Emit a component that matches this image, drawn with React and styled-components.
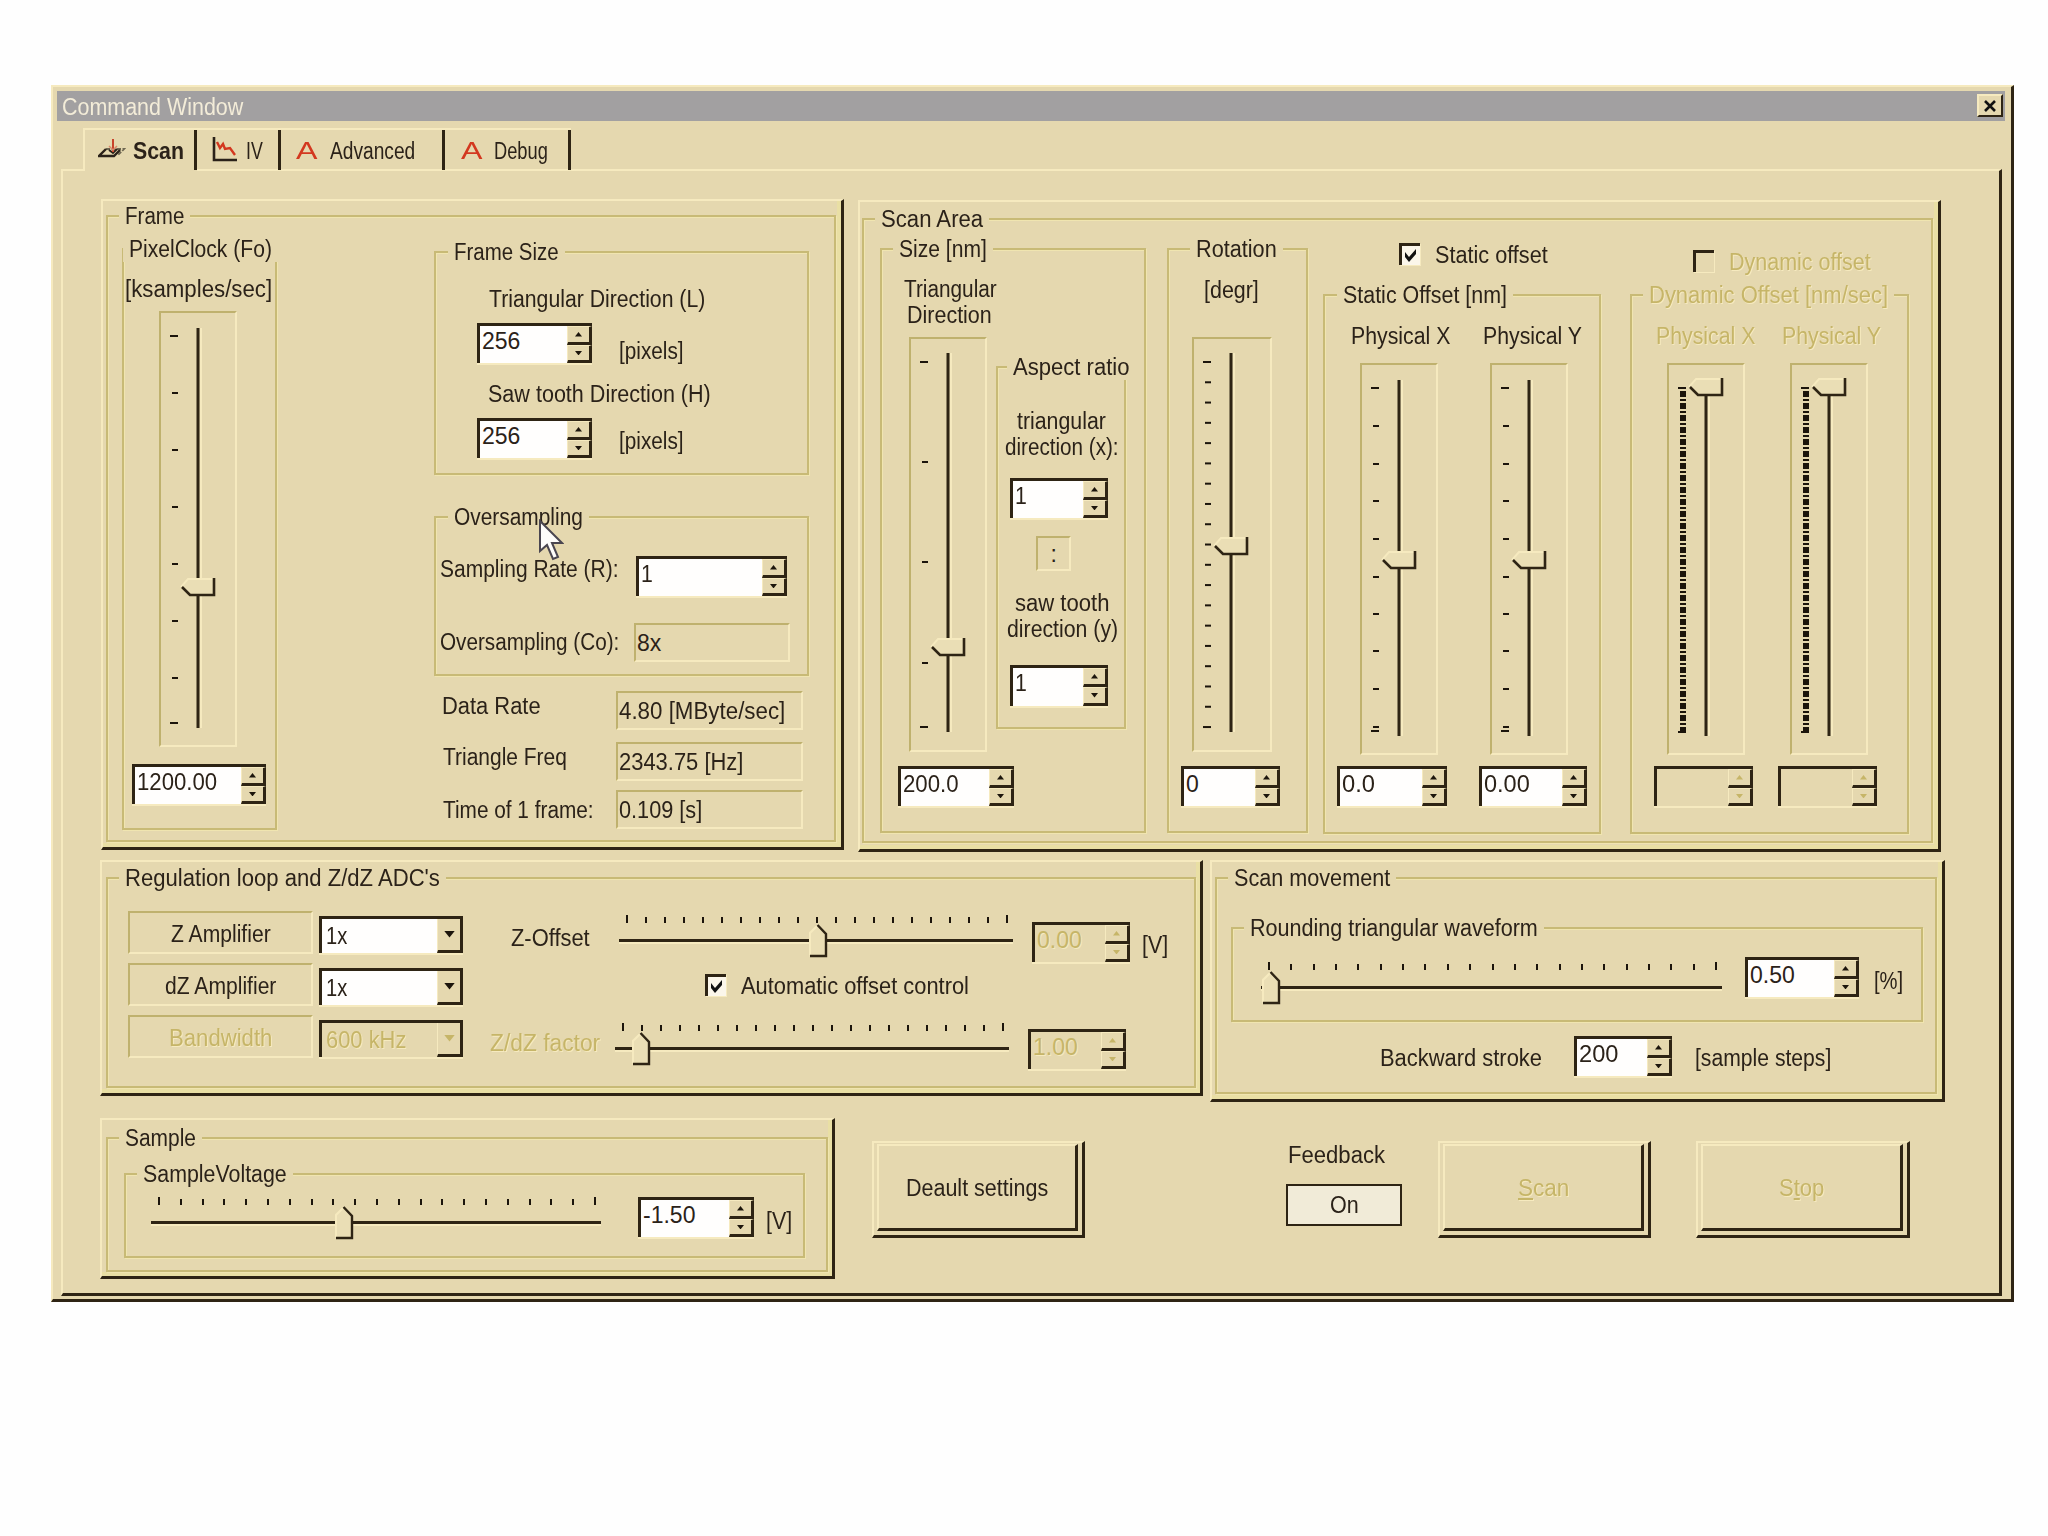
import React, { useLayoutEffect, useRef, useState } from 'react';
import styled, { createGlobalStyle, css } from 'styled-components';

const face = '#e5d8af';
const light = '#f6eabf';
const shade = '#c8ba76';
const dark = '#2e2414';
const ink = '#2b2219';
const faded = '#c6b568';

const GlobalStyle = createGlobalStyle`
  *, *::before, *::after {
    box-sizing: border-box;
  }
  body {
    margin: 0;
    background: #fefefe;
    color: ${ink};
    font-family: 'Liberation Sans', Arial, sans-serif;
    font-size: 23px;
    line-height: 26px;
  }
`;

// every part sits in a flex row or column and is spaced from the previous one
const spaced = css`
  flex: none;
  margin-top: ${({ $mt = 0 }) => $mt}px;
  margin-left: ${({ $ml = 0 }) => $ml}px;
`;

const Desktop = styled.div`
  height: 1536px;
  width: 2048px;
  padding: 85px 0 0 51px;
  overflow: hidden;
`;

const Window = styled.div`
  width: 1963px;
  height: 1217px;
  padding: 4px 6px 0 4px;
  background: ${face};
  border: 2px solid ${light};
  border-right: 3px solid ${dark};
  border-bottom: 3px solid ${dark};
`;

const TitleBar = styled.div`
  display: flex;
  justify-content: space-between;
  height: 30px;
  padding: 3px 2px 0 5px;
  background: #a2a0a1;
  color: #f3ecd8;
`;

const CloseButton = styled.button`
  display: flex;
  align-items: center;
  justify-content: center;
  width: 26px;
  height: 23px;
  padding: 0;
  background: ${face};
  border: 2px solid ${light};
  border-right-color: ${dark};
  border-bottom-color: ${dark};
`;

const Tabs = styled.div`
  display: flex;
  height: 41px;
  margin: 7px 0 0 26px;
`;

const Tab = styled.div`
  display: flex;
  position: relative;
  width: ${({ $w }) => $w}px;
  height: ${({ $active }) => ($active ? 43 : 41)}px;
  padding: 7px 0 0 ${({ $pad }) => $pad}px;
  background: ${face};
  border-top: 2px solid ${light};
  border-left: ${({ $active }) => ($active ? 2 : 0)}px solid ${light};
  font-weight: ${({ $active }) => ($active ? 'bold' : 'normal')};

  &::after {
    content: '';
    position: absolute;
    top: 0;
    right: 0;
    width: 3px;
    height: 40px;
    background: ${dark};
  }
`;

const Page = styled.div`
  width: 1941px;
  height: 1127px;
  margin-left: 4px;
  border: 2px solid ${light};
  border-right: 3px solid ${dark};
  border-bottom: 3px solid ${dark};
`;

const Row = styled.div`
  ${spaced}
  display: flex;
  align-items: flex-start;
  height: ${({ $h }) => ($h ? `${$h}px` : 'auto')};
`;

const Column = styled.div`
  ${spaced}
  display: flex;
  flex-direction: column;
  align-items: flex-start;
  width: ${({ $w }) => ($w ? `${$w}px` : 'auto')};
`;

const Panel = styled.div`
  ${spaced}
  width: ${({ $w }) => $w}px;
  height: ${({ $h }) => $h}px;
  border: 2px solid ${light};
  border-right: 3px solid ${dark};
  border-bottom: 3px solid ${dark};
  box-shadow: inset -4px -4px 0 #e9dfa4;
`;

const GroupBox = styled.fieldset`
  ${spaced}
  display: flex;
  flex-direction: ${({ $column }) => ($column ? 'column' : 'row')};
  align-items: flex-start;
  min-width: 0;
  width: ${({ $w }) => $w}px;
  height: ${({ $h }) => $h}px;
  padding: 0;
  border: 2px solid ${shade};
  box-shadow: inset 1px 1px 0 #f0e5b0, 1px 1px 0 #f0e5b0;
`;

const Legend = styled.legend`
  height: 26px;
  margin-left: ${({ $ml }) => $ml}px;
  padding: 0 6px;
  background: ${face};
`;

const TextBox = styled.span`
  ${spaced}
  display: block;
  width: ${({ $w }) => $w}px;
  height: 26px;
  line-height: 26px;
  white-space: nowrap;
  color: ${({ $off }) => ($off ? faded : 'inherit')};
  text-shadow: ${({ $off }) => ($off ? `1px 1px 0 ${light}` : 'none')};
`;

const TextRun = styled.span`
  display: inline-block;
  transform-origin: 0 50%;
`;

const Sunken = styled.div`
  ${spaced}
  display: flex;
  align-items: center;
  justify-content: ${({ $center }) => ($center ? 'center' : 'flex-start')};
  width: ${({ $w }) => $w}px;
  height: ${({ $h }) => $h}px;
  padding-left: ${({ $center }) => ($center ? 0 : 1)}px;
  border: 2px solid #bfb16e;
  border-right-color: ${light};
  border-bottom-color: ${light};
`;

const Field = styled.div`
  ${spaced}
  display: flex;
  justify-content: space-between;
  width: ${({ $w }) => $w}px;
  height: ${({ $h = 40 }) => $h}px;
  padding-left: 2px;
  background: ${({ $off }) => ($off ? face : '#fffefd')};
  border-top: 3px solid ${dark};
  border-left: 3px solid ${dark};
  box-shadow: 0 2px 0 ${light};
`;

const SpinButtons = styled.div`
  display: flex;
  flex-direction: column;
  width: 25px;
  background: ${face};
`;

const SpinButton = styled.div`
  display: flex;
  flex: 1;
  align-items: center;
  justify-content: center;
  border-top: 1px solid ${light};
  border-left: 1px solid ${light};
  border-right: 3px solid ${dark};
  border-bottom: 3px solid ${dark};
`;

const DropButton = styled.div`
  display: flex;
  align-items: center;
  justify-content: center;
  width: 26px;
  background: ${face};
  border-left: 1px solid ${light};
  border-right: 3px solid ${dark};
  border-bottom: 3px solid ${dark};
`;

const CheckMark = styled.span`
  ${spaced}
  display: flex;
  width: 21px;
  height: 22px;
  background: ${({ $off }) => ($off ? face : '#fbf6ea')};
  border-top: 3px solid ${dark};
  border-left: 3px solid ${dark};
  box-shadow: 1px 1px 0 ${light};
`;

const PushButton = styled.button`
  ${spaced}
  width: ${({ $w }) => $w}px;
  height: 97px;
  padding: 0;
  background: ${face};
  border: 2px solid ${light};
  border-right: 3px solid ${dark};
  border-bottom: 3px solid ${dark};
  color: ${ink};
  font: inherit;
`;

const ButtonFace = styled.span`
  display: flex;
  align-items: center;
  justify-content: center;
  width: calc(100% - 7px);
  height: 87px;
  margin: 1px 4px 4px 3px;
  padding-top: 2px;
  border: 2px solid ${light};
  border-right: 3px solid ${dark};
  border-bottom: 3px solid ${dark};
`;

const StateBox = styled.div`
  display: flex;
  align-items: center;
  justify-content: center;
  width: 116px;
  height: 42px;
  margin-top: 16px;
  background: #f1ebd8;
  border: 2px solid ${dark};
`;

const IconA = styled.span`
  color: #d3381f;
  font-weight: normal;
`;

const Icon = styled.svg`
  display: block;
  flex: none;
`;

const Pointer = styled.svg`
  position: absolute;
  top: 519px;
  left: 538px;
`;

// keeps a caption at the width of the narrow bitmap system font
function Text({ w, children, ...rest }) {
  const run = useRef(null);
  const [scale, setScale] = useState(1);
  useLayoutEffect(() => {
    setScale(w / run.current.offsetWidth);
  }, [w, children]);
  return (
    <TextBox $w={w} {...rest}>
      <TextRun ref={run} style={{ transform: `scaleX(${scale})` }}>
        {children}
      </TextRun>
    </TextBox>
  );
}

function Group({ title, titleW, titleX, off, children, ...rest }) {
  return (
    <GroupBox {...rest}>
      <Legend $ml={titleX}>
        <Text w={titleW} $off={off}>{title}</Text>
      </Legend>
      {children}
    </GroupBox>
  );
}

function Arrow({ up, off, size = 8 }) {
  return (
    <Icon width={size} height={size / 2 + 1} viewBox="0 0 8 5">
      <path d={up ? 'M0 5L4 0L8 5Z' : 'M0 0L8 0L4 5Z'} fill={off ? faded : '#1c150c'} />
    </Icon>
  );
}

function Spin({ value, textW, off, ...rest }) {
  return (
    <Field $off={off} {...rest}>
      {value ? <Text w={textW} $mt={2} $off={off}>{value}</Text> : <span />}
      <SpinButtons>
        <SpinButton><Arrow up off={off} size={7} /></SpinButton>
        <SpinButton><Arrow off={off} size={7} /></SpinButton>
      </SpinButtons>
    </Field>
  );
}

function Combo({ value, textW, off }) {
  return (
    <Field $off={off} $w={144} $h={37} $ml={6} $mt={5}>
      <Text w={textW} $ml={2} $mt={4} $off={off}>{value}</Text>
      <DropButton><Arrow off={off} size={11} /></DropButton>
    </Field>
  );
}

function Check({ label, textW, off, ...rest }) {
  return (
    <Row $h={26} {...rest}>
      <CheckMark $mt={1} $off={off}>
        {!off && (
          <Icon width="18" height="18" viewBox="0 0 18 18">
            <path d="M3 6L7 11L14 3V8L7 16L3 11Z" fill="#111" />
          </Icon>
        )}
      </CheckMark>
      <Text w={textW} $ml={15} $off={off}>{label}</Text>
    </Row>
  );
}

function VSlider({ w = 78, h, ticks, track, thumb, dense, ...rest }) {
  const last = ticks.length - 1;
  const [from, to] = track;
  return (
    <Sunken $w={w} $h={h} $center {...rest}>
      <Icon width={w - 4} height={h - 4} viewBox={`2 2 ${w - 4} ${h - 4}`}>
        {ticks.map((t, i) => {
          const end = i === 0 || i === last;
          const tall = dense && !end && i % 3 === 1;
          return (
            <rect
              key={t}
              x={end ? 11 : 13}
              y={tall ? t - 1 : t - 1}
              width={end ? 8 : 6}
              height={tall ? 4 : 2}
              fill="#1c150c"
            />
          );
        })}
        <rect x="37.500" y={from} width="3" height={to - from} fill={dark} />
        <rect x="41" y={from} width="2" height={to - from} fill={light} />
        <g transform={`translate(22 ${thumb})`}>
          <path d="M1 9L8 1H34V18H9Z" fill="#eadeb5" />
          <path d="M0 9L7 1H33" fill="none" stroke={light} strokeWidth="2" />
          <path d="M1 9L9 17H33V0" fill="none" stroke={dark} strokeWidth="2.6" />
        </g>
      </Icon>
    </Sunken>
  );
}

const SliderBox = styled.div`
  ${spaced}
`;

function HSlider({ w, last, thumb, ...rest }) {
  const step = (last - 12) / 20;
  return (
    <SliderBox {...rest}>
      <Icon width={w} height="46" viewBox={`0 0 ${w} 46`}>
        {Array.from({ length: 21 }, (_, i) => {
          const end = i === 0 || i === 20;
          return (
            <rect
              key={i}
              x={Math.round(12 + i * step) - 1}
              y={end ? 2 : 4}
              width="2"
              height={end ? 8 : 6}
              fill="#1c150c"
            />
          );
        })}
        <rect x="4" y="26" width={last + 2} height="3" fill={dark} />
        <rect x="4" y="29" width={last + 2} height="2" fill={light} />
        <g transform={`translate(${thumb} 11)`}>
          <path d="M0 33V8L9 0L18 10V33Z" fill="#eadeb5" />
          <path d="M1 31V9L9 1" fill="none" stroke={light} strokeWidth="2" />
          <path d="M8.500 1L17 10V32H1" fill="none" stroke={dark} strokeWidth="2.4" />
        </g>
      </Icon>
    </SliderBox>
  );
}

const range = (n, start, step) => Array.from({ length: n }, (_, i) => start + i * step);

const clockTicks = [25, 82, 139, 196, 253, 310, 367, 412];
const sizeTicks = [25, 125, 225, 326, 390];
const rotationTicks = range(19, 25, 20.28);
const offsetTicks = [25, 63, 101, 138, 176, 214, 251, 288, 326, 364, 368];
const denseTicks = range(87, 25, 4);

const readouts = [
  { label: 'Data Rate', w: 99, ml: 8, drop: 2, gap: 75, value: '4.80 [MByte/sec]', valueW: 166, mt: 15 },
  { label: 'Triangle Freq', w: 124, ml: 9, drop: 2, gap: 49, value: '2343.75 [Hz]', valueW: 124, mt: 13 },
  { label: 'Time of 1 frame:', w: 151, ml: 9, drop: 7, gap: 22, value: '0.109 [s]', valueW: 83, mt: 10 },
];

const amplifiers = [
  { label: 'Z Amplifier', w: 100, value: '1x', valueW: 21 },
  { label: 'dZ Amplifier', w: 111, value: '1x', valueW: 21 },
  { label: 'Bandwidth', w: 103, value: '600 kHz', valueW: 80, off: true },
];

function FramePanel() {
  return (
    <Panel $w={743} $h={651} $ml={38}>
      <Group title="Frame" titleW={59} titleX={11} $w={730} $h={639} $ml={3} $mt={2}>
        <Group title="PixelClock (Fo)" titleW={143} titleX={-1} $column $w={155} $h={594} $ml={14} $mt={7}>
          <Text w={147} $ml={1} $mt={14}>[ksamples/sec]</Text>
          <VSlider h={436} ticks={clockTicks} track={[17, 417]} thumb={267} $ml={35} $mt={9} />
          <Spin value="1200.00" textW={80} $w={134} $ml={8} $mt={17} />
        </Group>
        <Column $ml={155}>
          <Group title="Frame Size" titleW={105} titleX={12} $column $w={375} $h={236} $mt={10}>
            <Text w={216} $ml={53} $mt={21}>Triangular Direction (L)</Text>
            <Row $h={40} $mt={11}>
              <Spin value="256" textW={38} $w={115} $ml={41} />
              <Text w={65} $ml={27} $mt={15}>[pixels]</Text>
            </Row>
            <Text w={223} $ml={52} $mt={18}>Saw tooth Direction (H)</Text>
            <Row $h={40} $mt={11}>
              <Spin value="256" textW={38} $w={115} $ml={41} />
              <Text w={65} $ml={27} $mt={10}>[pixels]</Text>
            </Row>
          </Group>
          <Group title="Oversampling" titleW={129} titleX={12} $column $w={375} $h={172} $mt={29}>
            <Row $h={41} $mt={26}>
              <Text w={179} $ml={4}>Sampling Rate (R):</Text>
              <Spin value="1" textW={12} $w={151} $ml={17} />
            </Row>
            <Row $h={39} $mt={26}>
              <Text w={179} $ml={4} $mt={6}>Oversampling (Co):</Text>
              <Sunken $w={156} $h={39} $ml={15}><Text w={24}>8x</Text></Sunken>
            </Row>
          </Group>
          {readouts.map((r) => (
            <Row key={r.label} $h={38} $mt={r.mt}>
              <Text w={r.w} $ml={r.ml} $mt={r.drop}>{r.label}</Text>
              <Sunken $w={187} $h={39} $ml={r.gap}><Text w={r.valueW}>{r.value}</Text></Sunken>
            </Row>
          ))}
        </Column>
      </Group>
    </Panel>
  );
}

function OffsetAxis({ label, labelX, sliderX, spinX, spinW, value, textW, dense, ...rest }) {
  return (
    <Column {...rest}>
      <Text w={99} $ml={labelX} $mt={15} $off={dense}>{label}</Text>
      <VSlider
        h={392}
        dense={dense}
        ticks={dense ? denseTicks : offsetTicks}
        track={[17, 373]}
        thumb={dense ? 15 : 188}
        $ml={sliderX}
        $mt={14}
      />
      <Spin value={value} textW={textW} off={dense} $w={spinW} $ml={spinX} $mt={11} />
    </Column>
  );
}

function ScanAreaPanel() {
  return (
    <Panel $w={1083} $h={652} $ml={14} $mt={1}>
      <Group title="Scan Area" titleW={102} titleX={11} $w={1071} $h={637} $ml={2} $mt={4}>
        <Group title="Size [nm]" titleW={88} titleX={11} $w={266} $h={597} $ml={16} $mt={4}>
          <Column $w={114}>
            <Text w={93} $ml={22} $mt={14}>Triangular</Text>
            <Text w={85} $ml={25}>Direction</Text>
            <VSlider h={415} ticks={sizeTicks} track={[16, 395]} thumb={301} $ml={27} $mt={9} />
            <Spin value="200.0" textW={56} $w={116} $ml={16} $mt={14} />
          </Column>
          <Group title="Aspect ratio" titleW={116} titleX={9} $column $w={130} $h={375} $mt={92}>
            <Text w={89} $ml={19} $mt={28}>triangular</Text>
            <Text w={114} $ml={7}>direction (x):</Text>
            <Spin value="1" textW={12} $w={98} $ml={12} $mt={18} />
            <Sunken $w={35} $h={35} $ml={38} $mt={18} $center><Text w={6}>:</Text></Sunken>
            <Text w={94} $ml={17} $mt={19}>saw tooth</Text>
            <Text w={111} $ml={9}>direction (y)</Text>
            <Spin value="1" textW={12} $w={98} $h={41} $ml={12} $mt={23} />
          </Group>
        </Group>
        <Group title="Rotation" titleW={81} titleX={21} $column $w={141} $h={597} $ml={19} $mt={4}>
          <Text w={55} $ml={35} $mt={15}>[degr]</Text>
          <VSlider w={80} h={415} ticks={rotationTicks} track={[16, 395]} thumb={200} $ml={23} $mt={34} />
          <Spin value="0" textW={13} $w={99} $ml={12} $mt={14} />
        </Group>
        <Column $ml={13}>
          <Check label="Static offset" textW={113} $ml={76} $mt={10} />
          <Group title="Static Offset [nm]" titleW={164} titleX={12} $w={278} $h={552} $mt={14}>
            <OffsetAxis label="Physical X" labelX={26} sliderX={35} spinX={12} spinW={110} value="0.0" textW={33} $w={140} />
            <OffsetAxis label="Physical Y" labelX={18} sliderX={25} spinX={14} spinW={108} value="0.00" textW={46} />
          </Group>
        </Column>
        <Column $ml={27}>
          <Check label="Dynamic offset" textW={142} off $ml={63} $mt={17} />
          <Group title="Dynamic Offset [nm/sec]" titleW={239} titleX={11} off $w={279} $h={552} $mt={7}>
            <OffsetAxis label="Physical X" labelX={24} sliderX={35} spinX={22} spinW={99} dense $w={135} />
            <OffsetAxis label="Physical Y" labelX={15} sliderX={23} spinX={11} spinW={99} dense />
          </Group>
        </Column>
      </Group>
    </Panel>
  );
}

function RegulationPanel() {
  return (
    <Panel $w={1103} $h={236} $ml={37}>
      <Group title="Regulation loop and Z/dZ ADC's" titleW={315} titleX={11} $w={1090} $h={223} $ml={4} $mt={3}>
        <Column $ml={20} $mt={11}>
          {amplifiers.map((a) => (
            <Row key={a.label} $h={43} $mt={9}>
              <Sunken $w={185} $h={43} $center>
                <Text w={a.w} $mt={3} $off={a.off}>{a.label}</Text>
              </Sunken>
              <Combo value={a.value} textW={a.valueW} off={a.off} />
            </Row>
          ))}
        </Column>
        <Column>
          <Row $h={62} $mt={20}>
            <Text w={79} $ml={48} $mt={14}>Z-Offset</Text>
            <HSlider w={400} last={392} thumb={194} $ml={25} $mt={2} />
            <Spin value="0.00" textW={45} off $w={98} $ml={17} $mt={11} />
            <Text w={26} $ml={12} $mt={21}>[V]</Text>
          </Row>
          <Check label="Automatic offset control" textW={228} $ml={242} />
          <Row $h={46} $mt={22}>
            <Text w={110} $ml={27} $mt={9} $off>Z/dZ factor</Text>
            <HSlider w={400} last={392} thumb={21} $ml={11} />
            <Spin value="1.00" textW={45} off $w={98} $ml={17} $mt={8} />
          </Row>
        </Column>
      </Group>
    </Panel>
  );
}

function MovementPanel() {
  return (
    <Panel $w={735} $h={242} $ml={7}>
      <Group title="Scan movement" titleW={156} titleX={11} $column $w={722} $h={229} $ml={3} $mt={3}>
        <Group title="Rounding triangular waveform" titleW={288} titleX={11} $w={692} $h={107} $ml={14} $mt={24}>
          <HSlider w={470} last={459} thumb={5} $ml={24} $mt={19} />
          <Spin value="0.50" textW={45} $w={114} $ml={18} $mt={16} />
          <Text w={29} $ml={15} $mt={27}>[%]</Text>
        </Group>
        <Row $mt={14}>
          <Text w={162} $ml={163} $mt={9}>Backward stroke</Text>
          <Spin value="200" textW={39} $w={98} $ml={32} />
          <Text w={136} $ml={23} $mt={9}>[sample steps]</Text>
        </Row>
      </Group>
    </Panel>
  );
}

function SamplePanel() {
  return (
    <Panel $w={735} $h={161} $ml={37}>
      <Group title="Sample" titleW={71} titleX={11} $w={722} $h={147} $ml={4} $mt={5}>
        <Group title="SampleVoltage" titleW={144} titleX={11} $w={681} $h={97} $ml={16} $mt={10}>
          <HSlider w={460} last={448} thumb={188} $ml={21} $mt={8} />
          <Spin value="-1.50" textW={52} $w={116} $ml={31} $mt={10} />
          <Text w={26} $ml={12} $mt={21}>[V]</Text>
        </Group>
      </Group>
    </Panel>
  );
}

function ScanIcon() {
  return (
    <Icon width="28" height="24" viewBox="0 0 28 24">
      <path d="M8 12H26L20 18" fill="none" stroke="#6f6751" strokeWidth="1.800" strokeDasharray="4 1.500" />
      <path d="M8 12L1 19H16L22 13" fill="none" stroke={ink} strokeWidth="2.400" />
      <path d="M11 13L15 16L19 12" fill="none" stroke={ink} strokeWidth="2" />
      <path d="M15 2V15" stroke="#c9432b" strokeWidth="2" />
      <path d="M11 9L15 13L19 9" fill="none" stroke="#d88a6c" strokeWidth="1.500" />
    </Icon>
  );
}

function CurveIcon() {
  return (
    <Icon width="26" height="26" viewBox="0 0 26 26">
      <path d="M2 0V23H25" fill="none" stroke={ink} strokeWidth="2.6" />
      <path d="M5 5L8 11L11 7L13 12L18 11L23 18" fill="none" stroke="#d3381f" strokeWidth="2.4" />
    </Icon>
  );
}

function App() {
  return (
    <Desktop>
      <GlobalStyle />
      <Window>
        <TitleBar>
          <Text w={181}>Command Window</Text>
          <CloseButton>
            <Icon width="12" height="12" viewBox="0 0 12 12">
              <path d="M1 1L11 11M11 1L1 11" stroke="#111" strokeWidth="2.6" />
            </Icon>
          </CloseButton>
        </TitleBar>
        <Tabs>
          <Tab $active $w={114} $pad={13}>
            <ScanIcon />
            <Text w={51} $ml={7} $mt={1}>Scan</Text>
          </Tab>
          <Tab $w={84} $pad={15}>
            <CurveIcon />
            <Text w={17} $ml={8} $mt={1}>IV</Text>
          </Tab>
          <Tab $w={164} $pad={15}>
            <IconA><Text w={21} $mt={1}>A</Text></IconA>
            <Text w={85} $ml={13} $mt={1}>Advanced</Text>
          </Tab>
          <Tab $w={126} $pad={16}>
            <IconA><Text w={21} $mt={1}>A</Text></IconA>
            <Text w={54} $ml={12} $mt={1}>Debug</Text>
          </Tab>
        </Tabs>
        <Page>
          <Row $h={654} $mt={28}>
            <FramePanel />
            <ScanAreaPanel />
          </Row>
          <Row $h={242} $mt={7}>
            <RegulationPanel />
            <MovementPanel />
          </Row>
          <Row $mt={16}>
            <SamplePanel />
            <PushButton $w={213} $ml={37} $mt={23}>
              <ButtonFace><Text w={142}>Deault settings</Text></ButtonFace>
            </PushButton>
            <Column $ml={201} $mt={24}>
              <Text w={97} $ml={2}>Feedback</Text>
              <StateBox><Text w={29}>On</Text></StateBox>
            </Column>
            <PushButton $w={213} $ml={36} $mt={23}>
              <ButtonFace><Text w={51} $off><u>S</u>can</Text></ButtonFace>
            </PushButton>
            <PushButton $w={214} $ml={45} $mt={23}>
              <ButtonFace><Text w={45} $off>S<u>t</u>op</Text></ButtonFace>
            </PushButton>
          </Row>
        </Page>
      </Window>
      <Pointer width="26" height="42" viewBox="0 0 26 42">
        <path
          d="M2 2V32L9 26L15 40L20 38L14 24H24Z"
          fill="#fdfcfa"
          stroke="#4a4650"
          strokeWidth="2"
        />
      </Pointer>
    </Desktop>
  );
}

export default App;
